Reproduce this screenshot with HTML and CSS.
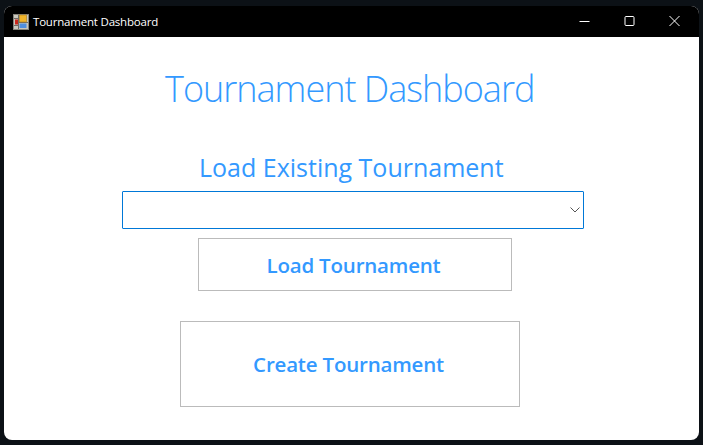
FILE: index.html
```html
<!DOCTYPE html>
<html lang="en">

<head>
    <meta charset="UTF-8">
    <title>Tournament Dashboard</title>
    <link rel="stylesheet" href="styles.css">
</head>

<body>
    <div class="window">
        <div class="titlebar">
            <svg class="app-icon" width="16" height="16" viewBox="0 0 16 16">
                <rect x="0.5" y="0.5" width="15" height="15" fill="#c9c7bd" stroke="#85837b" />
                <path d="M5.5 1V15M1 4.5H5M1 11.5H5M6 8.5H15" stroke="#6e6c66" fill="none" />
                <rect x="2" y="5.5" width="3" height="5" fill="#c8261c" />
                <rect x="6.5" y="1" width="7" height="7" fill="#f0b429" stroke="#a87a18" stroke-width="0.6" />
                <rect x="6.5" y="9.5" width="7" height="4.5" fill="#4f8ede" />
            </svg>
            <span class="window-title">Tournament Dashboard</span>
            <div class="controls">
                <svg class="control" width="45" height="31" viewBox="0 0 45 31">
                    <path d="M17.5 15.5H27.5" stroke="#fff" fill="none" />
                </svg>
                <svg class="control" width="45" height="31" viewBox="0 0 45 31">
                    <rect x="18" y="10.5" width="9" height="9" rx="1" stroke="#fff" fill="none" />
                </svg>
                <svg class="control" width="45" height="31" viewBox="0 0 45 31">
                    <path d="M17.5 10L27.5 20M27.5 10L17.5 20" stroke="#fff" fill="none" />
                </svg>
            </div>
        </div>
        <div class="content">
            <h1 class="title">Tournament Dashboard</h1>
            <h2 class="subtitle">Load Existing Tournament</h2>
            <div class="combo">
                <svg width="10" height="6" viewBox="0 0 10 6">
                    <path d="M0.5 0.5L5 5L9.5 0.5" stroke="#555" fill="none" />
                </svg>
            </div>
            <button class="btn btn-load" type="button">Load Tournament</button>
            <button class="btn btn-create" type="button">Create Tournament</button>
        </div>
    </div>
</body>

</html>
```

FILE: styles.css
```css
html,
body {
    height: 100%;
}

body {
    margin: 0;
    background: #0c1116;
    padding: 6px 4px 5px 4px;
    box-sizing: border-box;
    font-family: "Open Sans", "Liberation Sans", sans-serif;
    overflow: hidden;
}

.window {
    height: 434px;
    display: flex;
    flex-direction: column;
    border-radius: 8px;
    overflow: hidden;
    background: #fff;
}

.titlebar {
    height: 31px;
    flex: none;
    display: flex;
    align-items: center;
    background: #000;
    color: #fff;
    padding-left: 9px;
}

.app-icon {
    flex: none;
    margin-right: 4px;
}

.window-title {
    font-size: 11.5px;
    letter-spacing: -0.2px;
}

.controls {
    margin-left: auto;
    display: flex;
    padding-right: 2px;
}

.content {
    flex: 1;
    display: flex;
    flex-direction: column;
    align-items: flex-start;
    color: #3399ff;
}

.title {
    margin: 28px 0 0 161px;
    font-size: 36px;
    font-weight: 300;
    line-height: 48px;
    letter-spacing: -1px;
    white-space: nowrap;
}

.subtitle {
    margin: 38px 0 0 195px;
    font-size: 25px;
    font-weight: 400;
    line-height: 32px;
    white-space: nowrap;
}

.combo {
    box-sizing: border-box;
    width: 462px;
    height: 38px;
    margin: 8px 0 0 118px;
    border: 1px solid #0078d7;
    border-radius: 1px;
    display: flex;
    align-items: center;
    justify-content: flex-end;
    padding-right: 3px;
}

.btn {
    box-sizing: border-box;
    background: #fff;
    border: 1px solid #bbb;
    color: #3399ff;
    font-family: "Open Sans", "Liberation Sans", sans-serif;
    font-weight: 600;
    font-size: 20.5px;
    letter-spacing: -0.2px;
    padding: 0;
}

.btn-load {
    width: 314px;
    height: 53px;
    margin: 9px 0 0 194px;
    padding-right: 3px;
}

.btn-create {
    width: 340px;
    height: 86px;
    margin: 30px 0 0 176px;
    padding-right: 3px;
}
```
